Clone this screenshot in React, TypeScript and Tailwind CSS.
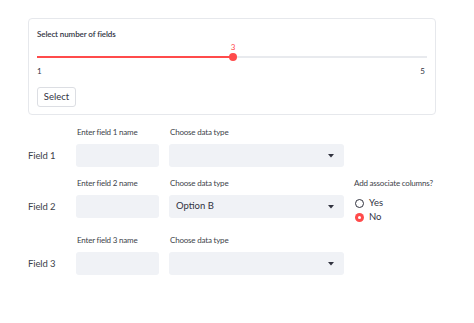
import React from 'react';

const font = { fontFamily: 'Lato, "Open Sans", sans-serif' };

const Caret = () => (
  <svg width="6" height="4" viewBox="0 0 6 4" className="shrink-0">
    <path d="M0 0 L6 0 L3 3.5 Z" fill="#31333f" />
  </svg>
);

interface RowProps {
  n: number;
  value?: string;
  extra?: React.ReactNode;
}

const FieldRow: React.FC<RowProps> = ({ n, value, extra }) => (
  <div className="flex gap-[10px]">
    <div className="w-[38px] shrink-0 pt-[24px] text-[9.5px] leading-[12px] tracking-[-0.1px] text-[#3d3f4a]">
      Field {n}
    </div>
    <div className="w-[83px] shrink-0">
      <div className="h-[18px] text-[8px] leading-[12px] tracking-[-0.2px] text-[#3d3f4a] pl-px">
        Enter field {n} name
      </div>
      <div className="h-[23px] rounded-[3px] bg-[#f0f2f6]" />
    </div>
    <div className="w-[175px] shrink-0">
      <div className="h-[18px] text-[8px] leading-[12px] tracking-[-0.2px] text-[#3d3f4a] pl-px">
        Choose data type
      </div>
      <div className="h-[23px] rounded-[3px] bg-[#f0f2f6] flex items-center justify-between pl-[7px] pr-[10px] text-[9.5px] text-[#31333f]">
        <span>{value}</span>
        <Caret />
      </div>
    </div>
    {extra}
  </div>
);

const Radio: React.FC<{ label: string; checked?: boolean }> = ({ label, checked }) => (
  <div className="flex items-center gap-[5px] h-[14px]">
    {checked ? (
      <span className="w-[9px] h-[9px] rounded-full bg-[#ff4b4b] flex items-center justify-center">
        <span className="w-[3px] h-[3px] rounded-full bg-white" />
      </span>
    ) : (
      <span className="w-[9px] h-[9px] rounded-full border border-[#31333f] bg-white" />
    )}
    <span className="text-[9.5px] text-[#31333f]">{label}</span>
  </div>
);

export default function App() {
  return (
    <div className="w-[474px] h-[323px] bg-white px-[28px] pt-[18px]" style={font}>
      <div className="w-[408px] border border-[#e6e8ec] rounded-[4px] px-[8px] pt-[9px] pb-[7px]">
        <div className="text-[8px] font-semibold tracking-[-0.1px] text-[#31333f] leading-[12px]">
          Select number of fields
        </div>
        <div className="relative mt-[7px] h-[19px]">
          <div className="absolute left-[196px] top-[-5px] -translate-x-1/2 text-[8px] leading-[10px] text-[#ff4b4b]">
            3
          </div>
          <div className="absolute left-0 right-0 top-[9px] h-[2px] bg-[#e8eaee]" />
          <div className="absolute left-0 w-[196px] top-[9px] h-[2px] bg-[#ff4b4b]" />
          <div className="absolute left-[192px] top-[6px] w-[8px] h-[8px] rounded-full bg-[#ff4b4b]" />
        </div>
        <div className="flex justify-between text-[8px] text-[#31333f] leading-[10px] pr-[2px]">
          <span>1</span>
          <span>5</span>
        </div>
        <button className="block mt-[11px] h-[20px] w-[39px] rounded-[3px] border border-[#dcdee3] bg-white text-[9.5px] leading-[18px] text-[#31333f]">
          Select
        </button>
      </div>

      <div className="flex flex-col gap-[10px] mt-[11px]">
        <FieldRow n={1} />
        <FieldRow
          n={2}
          value="Option B"
          extra={
            <div className="w-[90px] whitespace-nowrap">
              <div className="h-[18px] text-[8px] leading-[12px] tracking-[-0.2px] text-[#3d3f4a]">
                Add associate columns?
              </div>
              <div className="pt-[1px] pl-[1px]">
                <Radio label="Yes" />
                <Radio label="No" checked />
              </div>
            </div>
          }
        />
        <FieldRow n={3} />
      </div>
    </div>
  );
}
